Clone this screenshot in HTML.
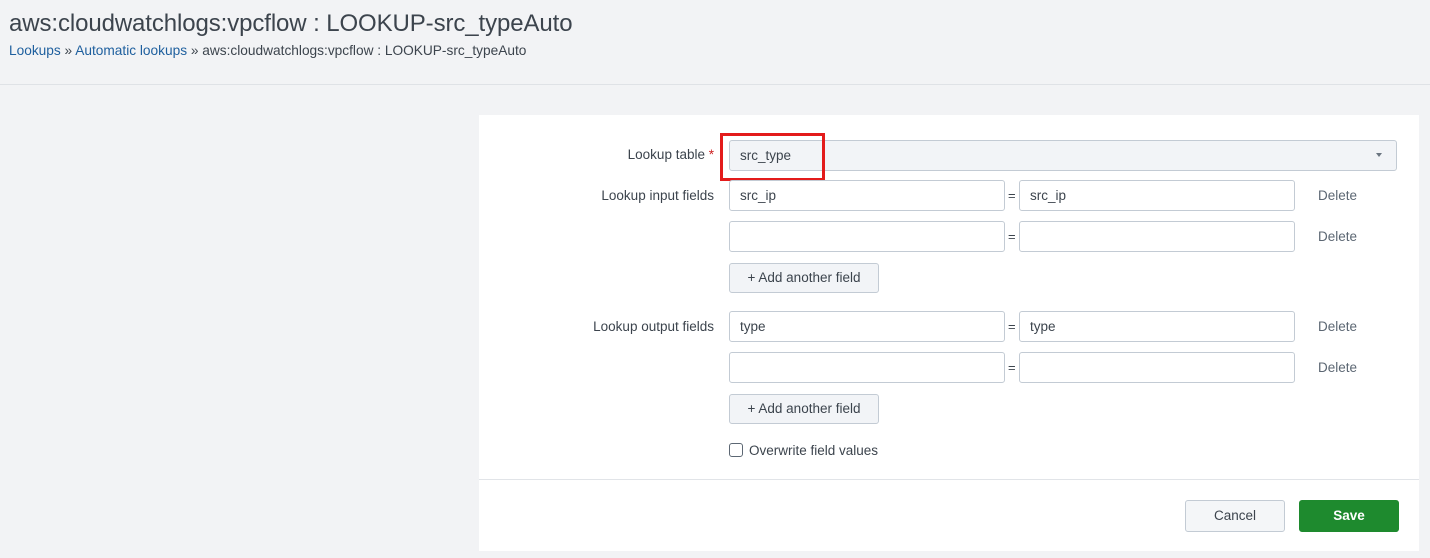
<!DOCTYPE html>
<html><head><meta charset="utf-8"><style>
*{box-sizing:border-box;margin:0;padding:0}
body{width:1430px;height:558px;background:#f2f3f5;font-family:"Liberation Sans",sans-serif;color:#3c444d;position:relative;overflow:hidden}
.a{position:absolute}
h1{position:absolute;left:9px;top:10px;font-size:24px;font-weight:normal;color:#3c444d;white-space:nowrap;letter-spacing:-0.1px}
.bc{left:9px;top:43px;font-size:13.7px;color:#3c444d;white-space:nowrap}
.bc span{color:#1e5f9e}
.hdr{left:0;top:84px;width:1430px;height:1px;background:#dfe2e6}
.panel{left:479px;top:115px;width:940px;height:436px;background:#fff}
.lbl{font-size:13.5px;text-align:right;width:200px;left:514px}
.in{height:31px;width:276px;border:1px solid #c3cbd4;border-radius:3px;background:#fff;font-size:13.5px;padding:7px 10px;color:#3c444d}
.eq{font-size:13px;left:1008px}
.del{font-size:13.5px;left:1318px;color:#5c6773}
.btn{width:150px;height:30px;border:1px solid #c3cbd4;border-radius:3px;background:#f2f4f7;font-size:13.5px;text-align:center;line-height:28px;left:729px}
</style></head><body>
<h1>aws:cloudwatchlogs:vpcflow : LOOKUP-src_typeAuto</h1>
<div class="a bc"><span>Lookups</span> » <span>Automatic lookups</span> » aws:cloudwatchlogs:vpcflow : LOOKUP-src_typeAuto</div>
<div class="a hdr"></div>
<div class="a panel"></div>

<div class="a lbl" style="top:147px">Lookup table <span style="color:#c22">*</span></div>
<div class="a" style="left:729px;top:140px;width:668px;height:31px;border:1px solid #c3cbd4;border-radius:3px;background:#f2f4f7;font-size:13.5px;padding:7px 10px">src_type</div>
<div class="a" style="left:1376px;top:153px;width:0;height:0;border-left:3px solid transparent;border-right:3px solid transparent;border-top:4px solid #6b7580"></div>
<div class="a" style="left:720px;top:133px;width:105px;height:48px;border:3px solid #e31b1b"></div>

<div class="a lbl" style="top:188px">Lookup input fields</div>
<div class="a in" style="left:729px;top:180px">src_ip</div><div class="a eq" style="top:188px">=</div><div class="a in" style="left:1019px;top:180px">src_ip</div><div class="a del" style="top:188px">Delete</div>
<div class="a in" style="left:729px;top:221px"></div><div class="a eq" style="top:229px">=</div><div class="a in" style="left:1019px;top:221px"></div><div class="a del" style="top:229px">Delete</div>
<div class="a btn" style="top:263px">+ Add another field</div>

<div class="a lbl" style="top:319px">Lookup output fields</div>
<div class="a in" style="left:729px;top:311px">type</div><div class="a eq" style="top:319px">=</div><div class="a in" style="left:1019px;top:311px">type</div><div class="a del" style="top:319px">Delete</div>
<div class="a in" style="left:729px;top:352px"></div><div class="a eq" style="top:360px">=</div><div class="a in" style="left:1019px;top:352px"></div><div class="a del" style="top:360px">Delete</div>
<div class="a btn" style="top:394px">+ Add another field</div>

<div class="a" style="left:729px;top:443px;width:14px;height:14px;border:1px solid #5c6773;border-radius:3px"></div>
<div class="a" style="left:749px;top:443px;font-size:13.5px">Overwrite field values</div>

<div class="a" style="left:479px;top:479px;width:940px;height:1px;background:#e1e4e8"></div>
<div class="a" style="left:1185px;top:500px;width:100px;height:32px;border:1px solid #c3cbd4;border-radius:3px;background:#f4f6f8;font-size:13.5px;text-align:center;line-height:30px;color:#3c444d">Cancel</div>
<div class="a" style="left:1299px;top:500px;width:100px;height:32px;border-radius:3px;background:#1e8a2e;font-size:13.5px;font-weight:bold;text-align:center;line-height:32px;color:#fff">Save</div>
</body></html>
